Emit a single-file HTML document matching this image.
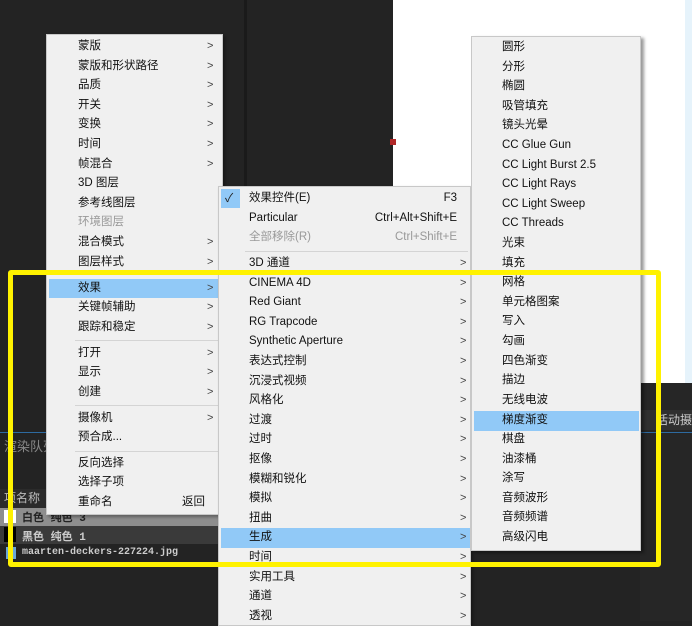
<!DOCTYPE html>
<html><head><meta charset="utf-8"><style>
*{margin:0;padding:0;box-sizing:border-box}
body{width:692px;height:621px;overflow:hidden;position:relative;background:#232323;font-family:"Liberation Sans","Noto Sans CJK SC",sans-serif;font-size:11.5px;color:#111}
.a{position:absolute}
.menu{position:absolute;background:#f0f0f0;border:1px solid #c8c8c8;box-shadow:2px 2px 3px rgba(0,0,0,.35)}
.it{position:absolute;left:0;right:0;height:19.6px;line-height:19.6px;white-space:nowrap}
.it .t{position:absolute}
.it .r{position:absolute;font-size:11px;color:#444}
.hl{background:#91c9f7}
.g{color:#999}
.sep{position:absolute;height:1px;background:#d4d4d4}
</style></head><body>
<!-- background panels -->
<div class="a" style="left:244px;top:0;width:3px;height:186px;background:#1a1a1a"></div>
<div class="a" style="left:393px;top:0;width:299px;height:383px;background:#fff"></div>
<div class="a" style="left:685px;top:0;width:7px;height:383px;background:#e6f3fb"></div>
<div class="a" style="left:390px;top:139px;width:6px;height:6px;background:#b02828"></div>
<div class="a" style="left:640px;top:383px;width:52px;height:238px;background:#262626"></div>
<div class="a" style="left:640px;top:410px;width:52px;height:20px;background:#303030;color:#ccc;font-size:12px;line-height:20px;padding-left:16px">活动摄</div>
<div class="a" style="left:640px;top:432px;width:52px;height:1px;background:#2d6aa0"></div>
<div class="a" style="left:0;top:432px;width:46px;height:1px;background:#2d6aa0"></div>
<div class="a" style="left:4px;top:436px;color:#888;font-size:13px">渲染队列</div>
<div class="a" style="left:0;top:489px;width:46px;height:19px;background:#2b2b2b;color:#bbb;font-size:12px;line-height:19px;padding-left:4px">项名称</div>
<div class="a" style="left:0;top:508px;width:218px;height:18px;background:#8e8e8e"></div>
<div class="a" style="left:4px;top:510px;width:12px;height:13px;background:#fff"></div>
<div class="a" style="left:22px;top:509px;font-family:'Liberation Mono','Noto Sans CJK SC',monospace;font-size:11px;color:#222;font-weight:bold">白色 纯色 3</div>
<div class="a" style="left:0;top:526px;width:218px;height:18px;background:#3a3a3a"></div>
<div class="a" style="left:4px;top:527px;width:12px;height:15px;background:#000"></div>
<div class="a" style="left:22px;top:528px;font-family:'Liberation Mono','Noto Sans CJK SC',monospace;font-size:11px;color:#ccc;font-weight:bold">黑色 纯色 1</div>
<div class="a" style="left:6px;top:547px;width:10px;height:12px;background:#6aa7d8"></div>
<div class="a" style="left:22px;top:547px;font-family:'Liberation Mono',monospace;font-size:10px;color:#ccc;font-weight:bold">maarten-deckers-227224.jpg</div>

<!-- menu 1 -->
<div class="menu" style="left:46px;top:34px;width:177px;height:481px">
<div class="it" style="top:2px"><span class="t" style="left:31px">蒙版</span><span class="r" style="left:160px">&gt;</span></div>
<div class="it" style="top:21.6px"><span class="t" style="left:31px">蒙版和形状路径</span><span class="r" style="left:160px">&gt;</span></div>
<div class="it" style="top:41.2px"><span class="t" style="left:31px">品质</span><span class="r" style="left:160px">&gt;</span></div>
<div class="it" style="top:60.8px"><span class="t" style="left:31px">开关</span><span class="r" style="left:160px">&gt;</span></div>
<div class="it" style="top:80.4px"><span class="t" style="left:31px">变换</span><span class="r" style="left:160px">&gt;</span></div>
<div class="it" style="top:100px"><span class="t" style="left:31px">时间</span><span class="r" style="left:160px">&gt;</span></div>
<div class="it" style="top:119.6px"><span class="t" style="left:31px">帧混合</span><span class="r" style="left:160px">&gt;</span></div>
<div class="it" style="top:139.2px"><span class="t" style="left:31px">3D 图层</span></div>
<div class="it" style="top:158.8px"><span class="t" style="left:31px">参考线图层</span></div>
<div class="it g" style="top:178.4px"><span class="t" style="left:31px">环境图层</span></div>
<div class="it" style="top:198px"><span class="t" style="left:31px">混合模式</span><span class="r" style="left:160px">&gt;</span></div>
<div class="it" style="top:217.6px"><span class="t" style="left:31px">图层样式</span><span class="r" style="left:160px">&gt;</span></div>
<div class="sep" style="left:28px;right:2px;top:239px"></div>
<div class="it hl" style="top:243.5px;left:2px;right:2px"><span class="t" style="left:29px">效果</span><span class="r" style="left:158px">&gt;</span></div>
<div class="it" style="top:263px"><span class="t" style="left:31px">关键帧辅助</span><span class="r" style="left:160px">&gt;</span></div>
<div class="it" style="top:282.6px"><span class="t" style="left:31px">跟踪和稳定</span><span class="r" style="left:160px">&gt;</span></div>
<div class="sep" style="left:28px;right:2px;top:305px"></div>
<div class="it" style="top:308.5px"><span class="t" style="left:31px">打开</span><span class="r" style="left:160px">&gt;</span></div>
<div class="it" style="top:328px"><span class="t" style="left:31px">显示</span><span class="r" style="left:160px">&gt;</span></div>
<div class="it" style="top:347.6px"><span class="t" style="left:31px">创建</span><span class="r" style="left:160px">&gt;</span></div>
<div class="sep" style="left:28px;right:2px;top:370px"></div>
<div class="it" style="top:373.5px"><span class="t" style="left:31px">摄像机</span><span class="r" style="left:160px">&gt;</span></div>
<div class="it" style="top:393px"><span class="t" style="left:31px">预合成...</span></div>
<div class="sep" style="left:28px;right:2px;top:416px"></div>
<div class="it" style="top:418.5px"><span class="t" style="left:31px">反向选择</span></div>
<div class="it" style="top:438px"><span class="t" style="left:31px">选择子项</span></div>
<div class="it" style="top:457.6px"><span class="t" style="left:31px">重命名</span><span class="t" style="left:135px">返回</span></div>
</div>

<!-- menu 2 -->
<div class="menu" style="left:218px;top:186px;width:253px;height:440px">
<div class="a" style="left:2px;top:2px;width:19px;height:19px;background:#91c9f7"></div>
<div class="a" style="left:6px;top:2px;line-height:19px;font-size:12px;color:#222">✓</div>
<div class="it" style="top:2px"><span class="t" style="left:30px">效果控件(E)</span><span class="t" style="right:13px">F3</span></div>
<div class="it" style="top:21.6px"><span class="t" style="left:30px">Particular</span><span class="t" style="right:13px">Ctrl+Alt+Shift+E</span></div>
<div class="it g" style="top:41.2px"><span class="t" style="left:30px">全部移除(R)</span><span class="t" style="right:13px">Ctrl+Shift+E</span></div>
<div class="sep" style="left:26px;right:2px;top:64px"></div>
<div class="it" style="top:67px"><span class="t" style="left:30px">3D 通道</span><span class="r" style="left:241px">&gt;</span></div>
<div class="it" style="top:86.6px"><span class="t" style="left:30px">CINEMA 4D</span><span class="r" style="left:241px">&gt;</span></div>
<div class="it" style="top:106.2px"><span class="t" style="left:30px">Red Giant</span><span class="r" style="left:241px">&gt;</span></div>
<div class="it" style="top:125.8px"><span class="t" style="left:30px">RG Trapcode</span><span class="r" style="left:241px">&gt;</span></div>
<div class="it" style="top:145.4px"><span class="t" style="left:30px">Synthetic Aperture</span><span class="r" style="left:241px">&gt;</span></div>
<div class="it" style="top:165px"><span class="t" style="left:30px">表达式控制</span><span class="r" style="left:241px">&gt;</span></div>
<div class="it" style="top:184.6px"><span class="t" style="left:30px">沉浸式视频</span><span class="r" style="left:241px">&gt;</span></div>
<div class="it" style="top:204.2px"><span class="t" style="left:30px">风格化</span><span class="r" style="left:241px">&gt;</span></div>
<div class="it" style="top:223.8px"><span class="t" style="left:30px">过渡</span><span class="r" style="left:241px">&gt;</span></div>
<div class="it" style="top:243.4px"><span class="t" style="left:30px">过时</span><span class="r" style="left:241px">&gt;</span></div>
<div class="it" style="top:263px"><span class="t" style="left:30px">抠像</span><span class="r" style="left:241px">&gt;</span></div>
<div class="it" style="top:282.6px"><span class="t" style="left:30px">模糊和锐化</span><span class="r" style="left:241px">&gt;</span></div>
<div class="it" style="top:302.2px"><span class="t" style="left:30px">模拟</span><span class="r" style="left:241px">&gt;</span></div>
<div class="it" style="top:321.8px"><span class="t" style="left:30px">扭曲</span><span class="r" style="left:241px">&gt;</span></div>
<div class="it hl" style="top:341.4px;left:2px;right:0"><span class="t" style="left:28px">生成</span><span class="r" style="left:239px">&gt;</span></div>
<div class="it" style="top:361px"><span class="t" style="left:30px">时间</span><span class="r" style="left:241px">&gt;</span></div>
<div class="it" style="top:380.6px"><span class="t" style="left:30px">实用工具</span><span class="r" style="left:241px">&gt;</span></div>
<div class="it" style="top:400.2px"><span class="t" style="left:30px">通道</span><span class="r" style="left:241px">&gt;</span></div>
<div class="it" style="top:419.8px"><span class="t" style="left:30px">透视</span><span class="r" style="left:241px">&gt;</span></div>
</div>

<!-- menu 3 -->
<div class="menu" style="left:471px;top:36px;width:170px;height:515px;box-shadow:3px 2px 3px rgba(0,0,0,.4)">
<div class="it" style="top:1px"><span class="t" style="left:30px">圆形</span></div>
<div class="it" style="top:20.6px"><span class="t" style="left:30px">分形</span></div>
<div class="it" style="top:40.2px"><span class="t" style="left:30px">椭圆</span></div>
<div class="it" style="top:59.8px"><span class="t" style="left:30px">吸管填充</span></div>
<div class="it" style="top:79.4px"><span class="t" style="left:30px">镜头光晕</span></div>
<div class="it" style="top:99px"><span class="t" style="left:30px">CC Glue Gun</span></div>
<div class="it" style="top:118.6px"><span class="t" style="left:30px">CC Light Burst 2.5</span></div>
<div class="it" style="top:138.2px"><span class="t" style="left:30px">CC Light Rays</span></div>
<div class="it" style="top:157.8px"><span class="t" style="left:30px">CC Light Sweep</span></div>
<div class="it" style="top:177.4px"><span class="t" style="left:30px">CC Threads</span></div>
<div class="it" style="top:197px"><span class="t" style="left:30px">光束</span></div>
<div class="it" style="top:216.6px"><span class="t" style="left:30px">填充</span></div>
<div class="it" style="top:236.2px"><span class="t" style="left:30px">网格</span></div>
<div class="it" style="top:255.8px"><span class="t" style="left:30px">单元格图案</span></div>
<div class="it" style="top:275.4px"><span class="t" style="left:30px">写入</span></div>
<div class="it" style="top:295px"><span class="t" style="left:30px">勾画</span></div>
<div class="it" style="top:314.6px"><span class="t" style="left:30px">四色渐变</span></div>
<div class="it" style="top:334.2px"><span class="t" style="left:30px">描边</span></div>
<div class="it" style="top:353.8px"><span class="t" style="left:30px">无线电波</span></div>
<div class="it hl" style="top:374.4px;left:2px;right:1px"><span class="t" style="left:28px">梯度渐变</span></div>
<div class="it" style="top:393px"><span class="t" style="left:30px">棋盘</span></div>
<div class="it" style="top:412.6px"><span class="t" style="left:30px">油漆桶</span></div>
<div class="it" style="top:432.2px"><span class="t" style="left:30px">涂写</span></div>
<div class="it" style="top:451.8px"><span class="t" style="left:30px">音频波形</span></div>
<div class="it" style="top:471.4px"><span class="t" style="left:30px">音频频谱</span></div>
<div class="it" style="top:491px"><span class="t" style="left:30px">高级闪电</span></div>
</div>

<!-- yellow frame -->
<div class="a" style="left:8px;top:270px;width:653px;height:297px;border:5px solid #fff200;border-radius:3px"></div>
</body></html>
